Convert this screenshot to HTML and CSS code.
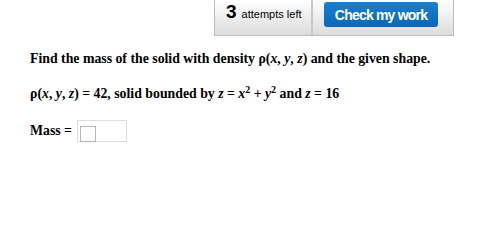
FILE: index.html
```html
<!DOCTYPE html>
<html>
<head>
<meta charset="utf-8">
<link rel="stylesheet" href="styles.css">
</head>
<body>
<div class="topbar">
  <div class="panel">
    <div class="attempts"><span class="num">3</span><span class="lbl">attempts left</span></div>
    <div class="check"><button class="btn">Check my work</button></div>
  </div>
</div>
<div class="content">
  <p class="q">Find the mass of the solid with density ρ(<i>x</i>, <i>y</i>, <i>z</i>) and the given shape.</p>
  <p class="q">ρ(<i>x</i>, <i>y</i>, <i>z</i>) = 42, solid bounded by <i>z</i> = <i>x</i><sup>2</sup> + <i>y</i><sup>2</sup> and <i>z</i> = 16</p>
  <div class="q answer">Mass = <span class="field"><span class="inner"></span></span></div>
</div>
</body>
</html>
```
FILE: styles.css
```css
html, body { margin: 0; padding: 0; background: #fff; }
body { width: 477px; height: 243px; overflow: hidden; }
.topbar { display: flex; padding-left: 214px; }
.panel {
  display: flex;
  height: 36px;
  box-sizing: border-box;
  border: 1px solid #bdbdbd;
  border-top: none;
  background: linear-gradient(#ffffff, #dcdcdc);
}
.attempts {
  width: 98px;
  box-sizing: border-box;
  border-right: 2px solid #c8c8c8;
  display: flex;
  align-items: baseline;
  padding: 1px 0 0 11px;
  font-family: "Liberation Sans", Arial, sans-serif;
  color: #000;
}
.num { font-size: 19px; font-weight: bold; margin-right: 5px; }
.lbl { font-size: 11px; }
.check { width: 140px; padding: 2px 0 0 11px; box-sizing: border-box; }
.btn {
  width: 114px;
  height: 25px;
  border: none;
  border-radius: 3px;
  background: linear-gradient(#1a7fd0, #0a68b8);
  color: #fff;
  font-family: "Liberation Sans", Arial, sans-serif;
  font-weight: bold;
  font-size: 14px;
  letter-spacing: -0.8px;
  padding: 0;
}
.content { padding: 14px 0 0 30px; font-family: "Liberation Serif", "Times New Roman", serif; font-weight: bold; font-size: 13.8px; color: #000; }
.q { margin: 0 0 17px 0; line-height: 18px; }
sup { font-size: 10px; line-height: 0; vertical-align: 5px; }
.answer { display: flex; align-items: center; }
.field {
  display: inline-block;
  width: 50px;
  height: 22px;
  margin-left: 5px;
  border: 1px solid #ddd;
  box-sizing: border-box;
  position: relative;
}
.inner {
  position: absolute;
  left: 2px; top: 5px;
  width: 16px; height: 16px;
  border: 1px solid #b5b5b5;
  box-sizing: border-box;
}
```
